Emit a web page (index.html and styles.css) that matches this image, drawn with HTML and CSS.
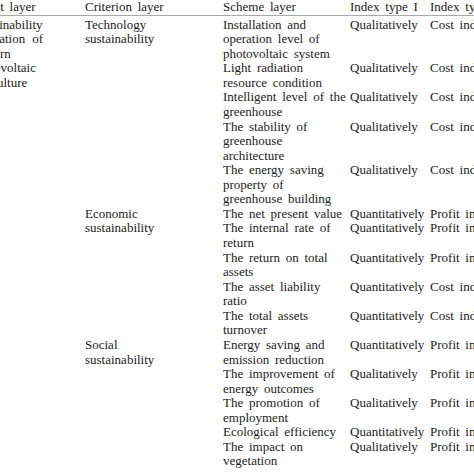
FILE: index.html
```html
<!DOCTYPE html>
<html>
<head>
<meta charset="utf-8">
<link rel="stylesheet" href="styles.css">
</head>
<body>
<div class="frame">
<table class="grid">
  <colgroup>
    <col class="c1"><col class="c2"><col class="c3"><col class="c4"><col class="c5">
  </colgroup>
  <thead>
    <tr><th>Target layer</th><th>Criterion layer</th><th>Scheme layer</th><th>Index type I</th><th>Index type II</th></tr>
  </thead>
  <tbody>
    <tr class="first">
      <td rowspan="14" class="target">Sustainability<br><span class="just">evaluation of</span><br>modern<br>photovoltaic<br>agriculture</td>
      <td rowspan="5">Technology<br>sustainability</td>
      <td>Installation and<br>operation level of<br>photovoltaic system</td><td>Qualitatively</td><td>Cost indicator</td>
    </tr>
    <tr><td>Light radiation<br>resource condition</td><td>Qualitatively</td><td>Cost indicator</td></tr>
    <tr><td>Intelligent level of the<br>greenhouse</td><td>Qualitatively</td><td>Cost indicator</td></tr>
    <tr><td>The stability of<br>greenhouse<br>architecture</td><td>Qualitatively</td><td>Cost indicator</td></tr>
    <tr><td>The energy saving<br>property of<br>greenhouse building</td><td>Qualitatively</td><td>Cost indicator</td></tr>
    <tr>
      <td rowspan="5">Economic<br>sustainability</td>
      <td>The net present value</td><td>Quantitatively</td><td>Profit indicator</td>
    </tr>
    <tr><td>The internal rate of<br>return</td><td>Quantitatively</td><td>Profit indicator</td></tr>
    <tr><td>The return on total<br>assets</td><td>Quantitatively</td><td>Profit indicator</td></tr>
    <tr><td>The asset liability<br>ratio</td><td>Quantitatively</td><td>Cost indicator</td></tr>
    <tr><td>The total assets<br>turnover</td><td>Quantitatively</td><td>Cost indicator</td></tr>
    <tr>
      <td rowspan="4">Social<br>sustainability</td>
      <td>Energy saving and<br>emission reduction</td><td>Quantitatively</td><td>Profit indicator</td>
    </tr>
    <tr><td>The improvement of<br>energy outcomes</td><td>Qualitatively</td><td>Profit indicator</td></tr>
    <tr><td>The promotion of<br>employment</td><td>Qualitatively</td><td>Profit indicator</td></tr>
    <tr><td>Ecological efficiency</td><td>Quantitatively</td><td>Profit indicator</td></tr>
    <tr><td></td><td></td><td>The impact on<br>vegetation</td><td>Qualitatively</td><td>Profit indicator</td></tr>
  </tbody>
</table>
</div>
</body>
</html>
```
FILE: styles.css
```css
html, body {
  margin: 0;
  padding: 0;
  background: #ffffff;
  overflow: hidden;
}
.frame {
  width: 474px;
  height: 474px;
  overflow: hidden;
}
.grid {
  margin-left: -29px;
  margin-top: 0;
  border-collapse: collapse;
  table-layout: fixed;
  width: 560px;
  font-family: "Liberation Serif", "Times New Roman", serif;
  font-size: 13px;
  line-height: 14.57px;
  color: #1c1c1c;
  word-spacing: 2.5px;
}
.c1 { width: 114px; }
.c2 { width: 138px; }
.c3 { width: 127px; }
.c4 { width: 80px; }
.c5 { width: 101px; }
th {
  font-weight: normal;
  text-align: left;
  padding: 0;
  border-bottom: 1px solid #a8a8a8;
  white-space: nowrap;
}
td {
  padding: 0;
  vertical-align: top;
  text-align: left;
  white-space: nowrap;
}
tr.first td {
  padding-top: 2px;
}
.just {
  display: inline-block;
  width: 72px;
  text-align: justify;
  text-align-last: justify;
  word-spacing: 0;
}
```
